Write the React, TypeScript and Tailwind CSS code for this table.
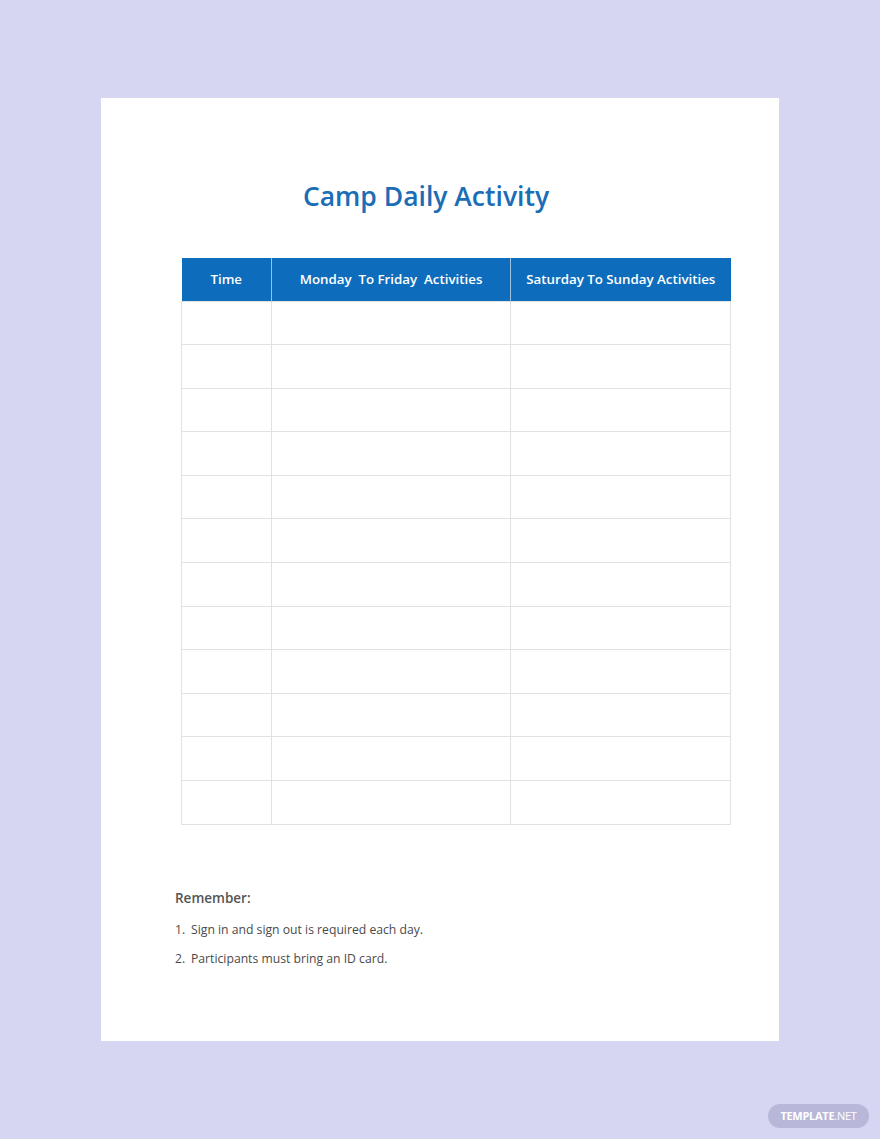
const rows = Array.from({ length: 12 })

const notes = [
    "Sign in and sign out is required each day.",
    "Participants must bring an ID card.",
]

export default function App() {
    return (
        <div
            className="relative min-h-[1139px] w-full bg-[#d6d5f2] pt-[98px] pl-[101px]"
            style={{ fontFamily: '"Open Sans", "Noto Sans", sans-serif' }}
        >
            {/* Document */}
            <div className="w-[678px] h-[943px] bg-white pt-[79px]">
                <h1 className="ml-[-28px] text-center text-[26.5px] leading-[38px] font-semibold text-[#1b6db5]">
                    Camp Daily Activity
                </h1>

                <table className="mt-[43px] ml-[80px] w-[549px] border-collapse table-fixed">
                    <thead>
                        <tr className="h-[43px] bg-[#0d6dbc] text-white text-[13.3px] font-semibold">
                            <th className="w-[90px] pt-[2px] border-r border-[#9cc2e3] font-semibold">Time</th>
                            <th className="w-[239px] pt-[2px] border-r border-[#9cc2e3] font-semibold whitespace-pre">Monday  To Friday  Activities</th>
                            <th className="w-[220px] pt-[2px] font-semibold">Saturday To Sunday Activities</th>
                        </tr>
                    </thead>
                    <tbody>
                        {rows.map((_, i) => (
                            <tr key={i} className="h-[43.6px]">
                                <td className="border border-[#e2e2e2]"></td>
                                <td className="border border-[#e2e2e2]"></td>
                                <td className="border border-[#e2e2e2]"></td>
                            </tr>
                        ))}
                    </tbody>
                </table>

                {/* Remember */}
                <div className="mt-[63px] ml-[74px] text-[#4a4a4a]">
                    <p className="text-[13.5px] leading-[20px] font-semibold text-[#555]">Remember:</p>
                    <ol className="mt-[12px] space-y-[9px] text-[12.2px] leading-[20px]">
                        {notes.map((n, i) => (
                            <li key={i} className="flex">
                                <span className="w-[16px]">{i + 1}.</span>
                                <span>{n}</span>
                            </li>
                        ))}
                    </ol>
                </div>
            </div>

            {/* Watermark */}
            <div className="absolute left-[768px] top-[1104px] flex h-[24px] w-[101px] items-center justify-center rounded-full bg-[#b8b7d9] text-[11px] text-white tracking-tight">
                <span className="font-bold">TEMPLATE</span>
                <span>.NET</span>
            </div>
        </div>
    )
}
